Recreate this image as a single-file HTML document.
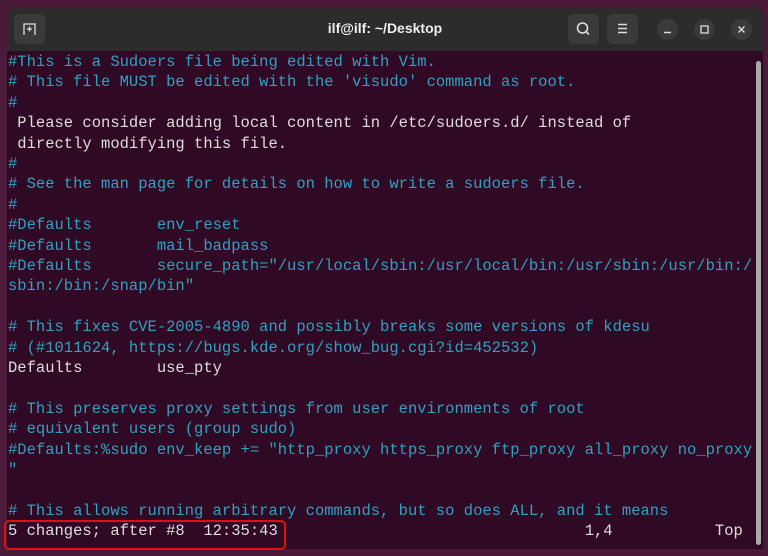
<!DOCTYPE html>
<html><head><style>
body{margin:0;width:768px;height:556px;background:#4a1a38;overflow:hidden;position:relative;font-family:"Liberation Sans",sans-serif}
.win{position:absolute;left:7px;top:7px;width:756px;height:542px;background:#300a24;border-radius:10px 10px 0 0;overflow:hidden}
.tb{position:absolute;left:0;top:0;width:756px;height:44px;background:#2c2c2c}
.btn{position:absolute;top:7px;width:31px;height:30px;background:#3a3a3a;border-radius:6px}
.c{position:absolute;top:12px;width:21px;height:21px;background:#3a3a3a;border-radius:50%}
.title{position:absolute;left:0;right:0;top:13px;text-align:center;color:#eee;font-weight:bold;font-size:14px}
pre{position:absolute;left:1px;top:45px;margin:0;font-family:"Liberation Mono",monospace;font-size:15.5px;line-height:20.4px;color:#2fa0bf;white-space:pre}
.w{color:#ddd}
.sb{position:absolute;left:749px;top:54px;width:5px;height:484px;background:#aaa;border-radius:3px}
.red{position:absolute;left:4px;top:520px;width:278px;height:26px;border:2px solid #e01010;border-radius:5px}
</style></head><body>
<div class="win">
<div class="tb">
<div class="btn" style="left:7px"><svg width="31" height="30"><path d="M10 21V10h11v11" fill="none" stroke="#ddd" stroke-width="1.3"/><path d="M13 15h5M15.5 12.5v5" stroke="#ddd" stroke-width="1.3"/></svg></div>
<div class="title">ilf@ilf: ~/Desktop</div>
<div class="btn" style="left:561px"><svg width="31" height="30"><circle cx="14.5" cy="14" r="5" fill="none" stroke="#ddd" stroke-width="1.6"/><path d="M18 17.5l3 3" stroke="#ddd" stroke-width="1.6"/></svg></div>
<div class="btn" style="left:600px"><svg width="31" height="30"><path d="M11 10.5h9M11 14.5h9M11 18.5h9" stroke="#ddd" stroke-width="1.4"/></svg></div>
<div class="c" style="left:650px"><svg width="21" height="21"><path d="M7 13.5h7" stroke="#ddd" stroke-width="1.4"/></svg></div>
<div class="c" style="left:687px"><svg width="21" height="21"><rect x="7" y="7" width="7" height="7" fill="none" stroke="#ddd" stroke-width="1.3"/></svg></div>
<div class="c" style="left:724px"><svg width="21" height="21"><path d="M7.5 7.5l6 6M13.5 7.5l-6 6" stroke="#ddd" stroke-width="1.4"/></svg></div>
</div>
<pre>#This is a Sudoers file being edited with Vim.
# This file MUST be edited with the 'visudo' command as root.
#
<span class="w"> Please consider adding local content in /etc/sudoers.d/ instead of
 directly modifying this file.</span>
#
# See the man page for details on how to write a sudoers file.
#
#Defaults       env_reset
#Defaults       mail_badpass
#Defaults       secure_path="/usr/local/sbin:/usr/local/bin:/usr/sbin:/usr/bin:/
sbin:/bin:/snap/bin"

# This fixes CVE-2005-4890 and possibly breaks some versions of kdesu
# (#1011624, https://bugs.kde.org/show_bug.cgi?id=452532)
<span class="w">Defaults        use_pty</span>

# This preserves proxy settings from user environments of root
# equivalent users (group sudo)
#Defaults:%sudo env_keep += "http_proxy https_proxy ftp_proxy all_proxy no_proxy
"

# This allows running arbitrary commands, but so does ALL, and it means
<span class="w">5 changes; after #8  12:35:43                                 1,4           Top</span></pre>
<div class="sb"></div>
</div>
<div class="red"></div>
</body></html>
